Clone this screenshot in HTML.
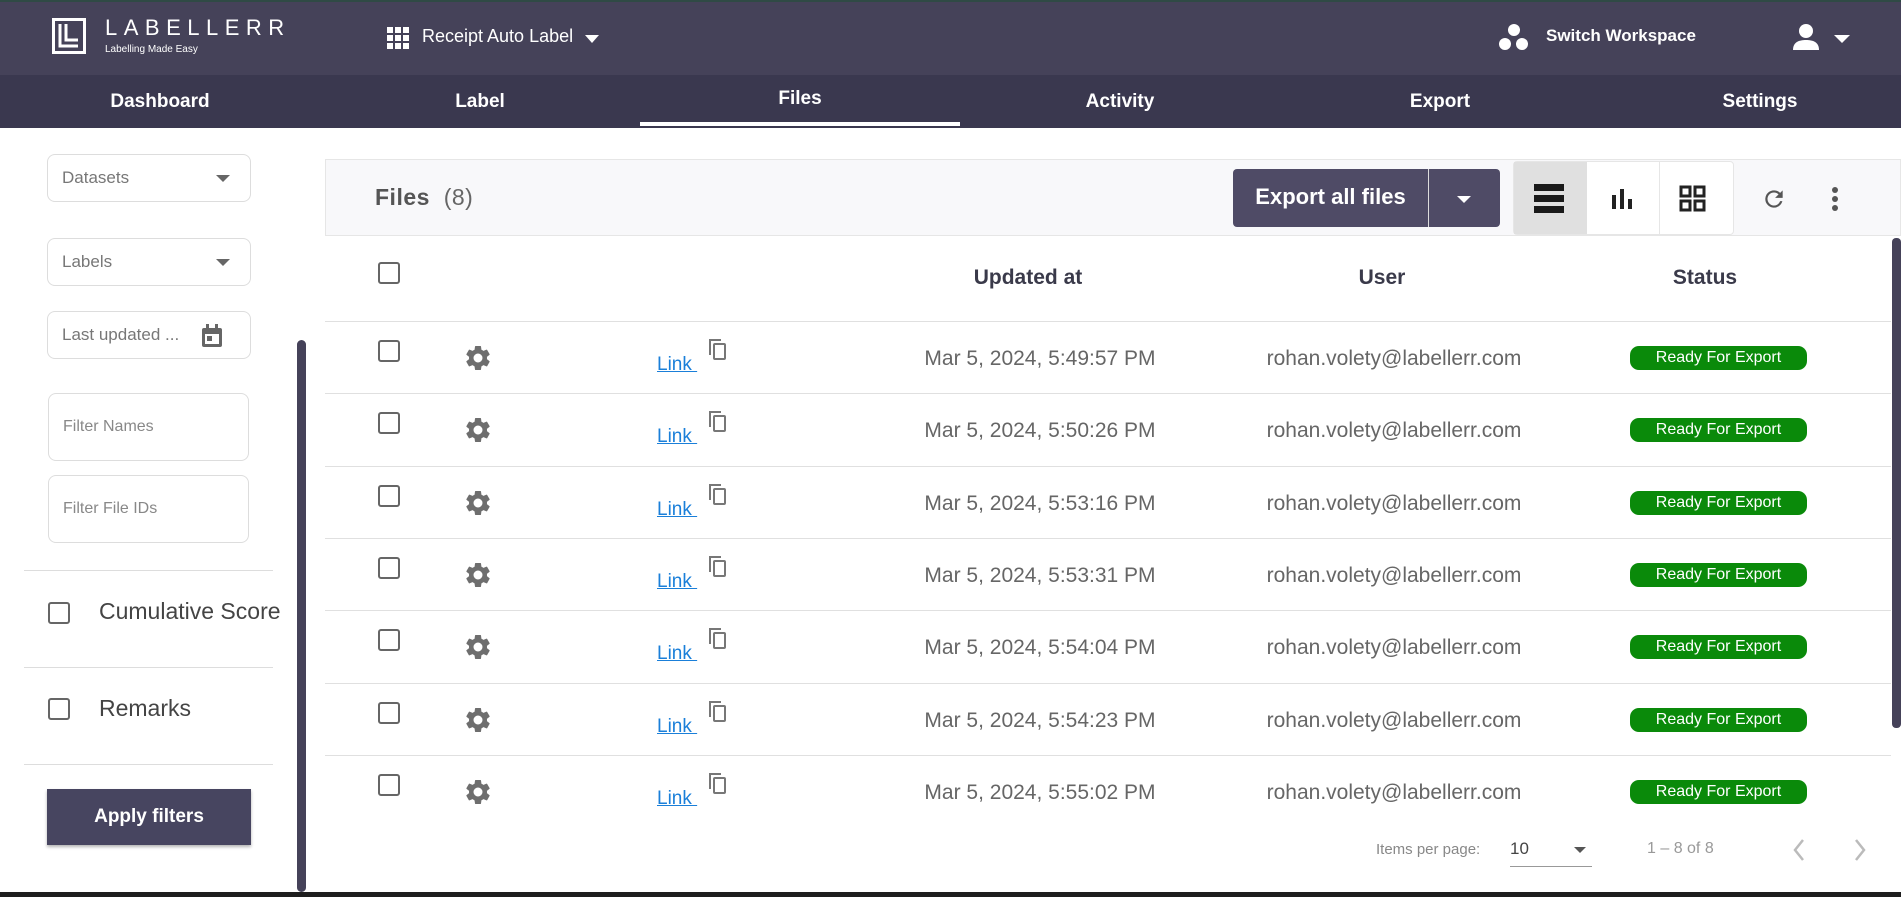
<!DOCTYPE html>
<html><head><meta charset="utf-8"><style>
*{box-sizing:border-box;margin:0;padding:0}
body{width:1901px;height:897px;position:relative;overflow:hidden;background:#fff;font-family:"Liberation Sans",sans-serif}
.a{position:absolute}
.hdr{left:0;top:0;width:1901px;height:75px;background:#454259;border-top:2px solid #2f4a45}
.nav{left:0;top:75px;width:1901px;height:53px;background:#3a384f}
.tab{position:absolute;top:0;width:320px;height:53px;line-height:53px;text-align:center;color:#fff;font-weight:bold;font-size:19px}
.sel{left:47px;width:204px;height:48px;border:1px solid #ddd;border-radius:8px;color:#777;font-size:17px;padding-left:14px;line-height:46px}
.inp{left:48px;width:201px;height:68px;border:1px solid #ddd;border-radius:8px;color:#888;font-size:16px;padding-left:14px;line-height:66px}
.car{position:absolute;right:20px;top:20px;width:0;height:0;border-left:7px solid transparent;border-right:7px solid transparent;border-top:7px solid #666}
.hr{left:24px;width:249px;height:1px;background:#ddd}
.cb{width:22px;height:22px;border:2.5px solid #666;border-radius:3px}
.rowline{left:325px;width:1566px;height:1px;background:#e0e0e0}
.cell{color:#666;font-size:21px;text-align:center}
.badge{left:1630px;width:177px;height:24px;background:#0a8a0a;border-radius:9px;color:#fff;font-size:16px;text-align:center;line-height:24px}
.link{color:#1a7fd9;text-decoration:underline;font-size:19px}
.th{width:200px;text-align:center;font-weight:bold;font-size:21px;color:#3a3a4a;top:266px}
</style></head><body>
<div class="a hdr"></div>
<svg class="a" style="left:52px;top:18px" width="34" height="36" viewBox="0 0 34 36"><rect x="1.5" y="1.5" width="31" height="33" fill="none" stroke="#fff" stroke-width="3"/><path d="M8 6v22h18" fill="none" stroke="#fff" stroke-width="3"/><path d="M14 6v16h12" fill="none" stroke="#fff" stroke-width="3"/></svg>
<div class="a" style="left:105px;top:15px;color:#fff;font-size:22px;letter-spacing:6.5px">LABELLERR</div>
<div class="a" style="left:105px;top:44px;color:#fff;font-size:10px">Labelling Made Easy</div>
<svg class="a" style="left:387px;top:27px" width="22" height="22"><g fill="#fff"><rect x="0" y="0" width="6" height="6"/><rect x="8" y="0" width="6" height="6"/><rect x="16" y="0" width="6" height="6"/><rect x="0" y="8" width="6" height="6"/><rect x="8" y="8" width="6" height="6"/><rect x="16" y="8" width="6" height="6"/><rect x="0" y="16" width="6" height="6"/><rect x="8" y="16" width="6" height="6"/><rect x="16" y="16" width="6" height="6"/></g></svg>
<div class="a" style="left:422px;top:26px;color:#fff;font-size:18px">Receipt Auto Label</div>
<div class="a" style="left:585px;top:35px;border-left:7px solid transparent;border-right:7px solid transparent;border-top:8px solid #fff"></div>
<svg class="a" style="left:1498px;top:23px" width="32" height="29"><g fill="#fff"><circle cx="16" cy="7" r="6"/><circle cx="7" cy="21" r="6"/><circle cx="24" cy="21" r="6"/></g></svg>
<div class="a" style="left:1546px;top:26px;color:#fff;font-size:17px;font-weight:bold">Switch Workspace</div>
<svg class="a" style="left:1792px;top:24px" width="28" height="26"><g fill="#fff"><circle cx="14" cy="7" r="7"/><path d="M1 26c0-8 6-10 13-10s13 2 13 10z"/></g></svg>
<div class="a" style="left:1834px;top:35px;border-left:8px solid transparent;border-right:8px solid transparent;border-top:8px solid #fff"></div>
<div class="a nav">
<div class="tab" style="left:0">Dashboard</div><div class="tab" style="left:320px">Label</div><div class="tab" style="left:640px;line-height:47px">Files</div><div class="tab" style="left:960px">Activity</div><div class="tab" style="left:1280px">Export</div><div class="tab" style="left:1600px">Settings</div>
<div class="a" style="left:640px;top:47px;width:320px;height:4px;background:#fff"></div>
</div>
<div class="a sel" style="top:154px">Datasets<div class="car"></div></div>
<div class="a sel" style="top:238px">Labels<div class="car"></div></div>
<div class="a sel" style="top:311px">Last updated ...
<svg class="a" style="left:153px;top:12px" width="22" height="24" viewBox="0 0 22 24"><rect x="1" y="4" width="20" height="19" rx="2" fill="#666"/><rect x="4" y="10" width="14" height="10" fill="#fff"/><rect x="6" y="12" width="5" height="5" fill="#666"/><rect x="5" y="0" width="3" height="5" fill="#666"/><rect x="14" y="0" width="3" height="5" fill="#666"/></svg></div>
<div class="a inp" style="top:393px">Filter Names</div>
<div class="a inp" style="top:475px">Filter File IDs</div>
<div class="a hr" style="top:570px"></div>
<div class="a cb" style="left:48px;top:602px"></div>
<div class="a" style="left:99px;top:598px;font-size:23px;color:#444">Cumulative Score</div>
<div class="a hr" style="top:667px"></div>
<div class="a cb" style="left:48px;top:698px"></div>
<div class="a" style="left:99px;top:695px;font-size:23px;color:#444">Remarks</div>
<div class="a hr" style="top:764px"></div>
<div class="a" style="left:47px;top:789px;width:204px;height:56px;background:#474560;color:#fff;font-weight:bold;font-size:19px;text-align:center;line-height:56px;box-shadow:0 2px 3px rgba(0,0,0,.3)">Apply filters</div>
<div class="a" style="left:297px;top:340px;width:9px;height:552px;background:#454259;border-radius:5px"></div>
<div class="a" style="left:325px;top:159px;width:1576px;height:77px;background:#f8f8fa;border:1px solid #e6e6e6"></div>
<div class="a" style="left:375px;top:184px;font-size:23px;color:#555;letter-spacing:0.5px"><b>Files</b>&nbsp; <span style="color:#666">(8)</span></div>
<div class="a" style="left:1233px;top:169px;width:267px;height:58px;background:#4f4b66;border-radius:4px"></div>
<div class="a" style="left:1428px;top:169px;width:1px;height:58px;background:#ddd"></div>
<div class="a" style="left:1233px;top:184px;width:195px;text-align:center;color:#fff;font-weight:bold;font-size:22px">Export all files</div>
<div class="a" style="left:1457px;top:196px;border-left:7px solid transparent;border-right:7px solid transparent;border-top:7px solid #fff"></div>
<div class="a" style="left:1513px;top:161px;width:221px;height:74px;background:#fff;border:1px solid #e6e6e6;border-radius:4px"></div>
<div class="a" style="left:1514px;top:162px;width:73px;height:72px;background:#e0e0e0"></div>
<div class="a" style="left:1659px;top:162px;width:1px;height:72px;background:#e6e6e6"></div>
<svg class="a" style="left:1534px;top:184px" width="30" height="30"><g fill="#1a1a1a"><rect y="0" width="30" height="7"/><rect y="11" width="30" height="7"/><rect y="22" width="30" height="7"/></g></svg>
<svg class="a" style="left:1610px;top:187px" width="24" height="24"><g fill="#222"><rect x="2" y="8" width="4" height="14"/><rect x="10" y="2" width="4" height="20"/><rect x="18" y="12" width="4" height="10"/></g></svg>
<svg class="a" style="left:1679px;top:185px" width="28" height="28"><g fill="none" stroke="#222" stroke-width="3"><rect x="2" y="2" width="9" height="9"/><rect x="16" y="2" width="9" height="9"/><rect x="2" y="16" width="9" height="9"/><rect x="16" y="16" width="9" height="9"/></g></svg>
<svg class="a" style="left:1761px;top:186px" width="26" height="26" viewBox="0 0 24 24"><path d="M17.65 6.35A7.96 7.96 0 0 0 12 4a8 8 0 1 0 7.73 10h-2.08A6 6 0 1 1 12 6c1.66 0 3.14.69 4.22 1.78L13 11h7V4z" fill="#555"/></svg>
<svg class="a" style="left:1828px;top:186px" width="14" height="28"><g fill="#555"><circle cx="7" cy="4" r="3"/><circle cx="7" cy="13" r="3"/><circle cx="7" cy="22" r="3"/></g></svg>
<div class="a" style="left:1892px;top:238px;width:9px;height:490px;background:#454259;border-radius:4px"></div>
<div class="a cb" style="left:378px;top:262px"></div>
<div class="a th" style="left:928px">Updated at</div>
<div class="a th" style="left:1282px">User</div>
<div class="a th" style="left:1605px">Status</div>
<div id="rows"></div>
<script>
var d=["5:49:57","5:50:26","5:53:16","5:53:31","5:54:04","5:54:23","5:55:02"],h="";
for(var i=0;i<7;i++){var t=321+i*72.3;
h+='<div class="a rowline" style="top:'+t+'px"></div>'+
'<div class="a cb" style="left:378px;top:'+(t+19)+'px"></div>'+
'<svg class="a" style="left:463px;top:'+(t+22)+'px" width="30" height="30" viewBox="0 0 24 24"><path fill="#6e6e6e" d="M19.14 12.94c.04-.3.06-.61.06-.94 0-.32-.02-.64-.07-.94l2.03-1.58a.49.49 0 0 0 .12-.61l-1.920-3.32a.49.49 0 0 0-.59-.22l-2.39.96c-.5-.38-1.03-.7-1.62-.94l-.36-2.54a.48.48 0 0 0-.48-.41h-3.84c-.24 0-.43.17-.47.41l-.36 2.54c-.59.24-1.13.57-1.62.94l-2.39-.96a.48.48 0 0 0-.59.22L2.74 8.87c-.12.21-.08.47.12.61l2.03 1.58c-.05.3-.09.63-.09.94s.02.64.07.94l-2.03 1.58a.49.49 0 0 0-.12.61l1.92 3.32c.12.22.37.29.59.22l2.39-.96c.5.38 1.03.7 1.62.94l.36 2.54c.05.24.24.41.48.41h3.84c.24 0 .44-.17.47-.41l.36-2.54c.59-.24 1.130-.56 1.62-.94l2.39.96c.22.08.47 0 .59-.22l1.92-3.32c.12-.22.07-.47-.12-.61zM12 15.6A3.6 3.6 0 1 1 12 8.4a3.6 3.6 0 0 1 0 7.2z"/></svg>'+
'<div class="a link" style="left:657px;top:'+(t+33)+'px">Link&nbsp;</div>'+
'<svg class="a" style="left:707px;top:'+(t+16)+'px" width="22" height="24" viewBox="0 0 22 24"><path d="M3 18V3h11" fill="none" stroke="#777" stroke-width="2"/><rect x="7" y="7" width="11" height="15" rx="1" fill="none" stroke="#777" stroke-width="2"/></svg>'+
'<div class="a cell" style="left:890px;width:300px;top:'+(t+26)+'px">Mar 5, 2024, '+d[i]+' PM</div>'+
'<div class="a cell" style="left:1244px;width:300px;top:'+(t+26)+'px">rohan.volety@labellerr.com</div>'+
'<div class="a badge" style="top:'+(t+25)+'px">Ready For Export</div>';}
document.getElementById("rows").innerHTML=h;
</script>
<div class="a" style="left:1376px;top:841px;font-size:15px;color:#888">Items per page:</div>
<div class="a" style="left:1510px;top:839px;font-size:17px;color:#444">10</div>
<div class="a" style="left:1574px;top:847px;border-left:6px solid transparent;border-right:6px solid transparent;border-top:6px solid #555"></div>
<div class="a" style="left:1510px;top:866px;width:82px;height:1px;background:#999"></div>
<div class="a" style="left:1647px;top:840px;font-size:16px;color:#999">1 – 8 of 8</div>
<svg class="a" style="left:1792px;top:838px" width="14" height="24"><path d="M11 2L3 12l8 10" fill="none" stroke="#bbb" stroke-width="2.5"/></svg>
<svg class="a" style="left:1853px;top:838px" width="14" height="24"><path d="M3 2l8 10-8 10" fill="none" stroke="#bbb" stroke-width="2.5"/></svg>
<div class="a" style="left:0;top:892px;width:1901px;height:5px;background:#1e1e1e"></div>
</body></html>
